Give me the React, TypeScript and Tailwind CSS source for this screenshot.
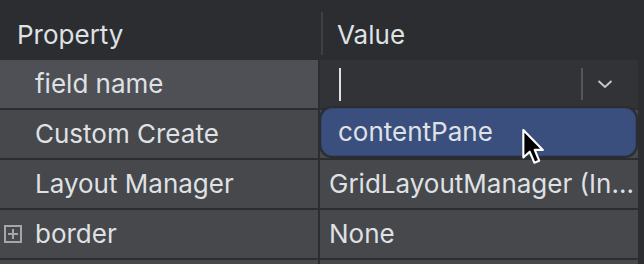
import React from "react";

function Row({ left, right, leftBg = "bg-[#46484c]", rightBg = "bg-[#46484c]", plus = false, rightContent }: { left: string; right?: string; leftBg?: string; rightBg?: string; plus?: boolean; rightContent?: React.ReactNode }) {
  return (
    <div className="flex h-[48px] shrink-0 gap-[2px]">
      <div className={`relative flex w-[318px] items-center pl-[35px] ${leftBg}`}>
        {plus && (
          <div className="absolute left-[4px] top-[15px] flex h-[18px] w-[18px] items-center justify-center border-[2px] border-[#a4a6aa]">
            <div className="absolute h-[2px] w-[10px] bg-[#a4a6aa]" />
            <div className="absolute h-[10px] w-[2px] bg-[#a4a6aa]" />
          </div>
        )}
        <span className="whitespace-nowrap">{left}</span>
      </div>
      <div className={`flex w-[318px] min-w-0 items-center pl-[9px] pr-[2px] ${rightBg}`}>
        {rightContent ?? <span className="min-w-0 truncate whitespace-nowrap leading-[1.4]">{right}</span>}
      </div>
    </div>
  );
}

export default function App() {
  return (
    <div
      className="relative h-[264px] w-[644px] overflow-hidden bg-[#2b2d30] text-[26px] leading-none text-[#dfe1e5]"
      style={{ fontFamily: "Inter, 'Noto Sans', sans-serif" }}
    >
      <div className="flex h-[58px] items-end pb-[10px]">
        <div className="w-[321px] pl-[17px]">Property</div>
        <div className="mb-[-7px] h-[43px] w-[2px] bg-[#3e4044]" />
        <div className="pl-[14px]">Value</div>
      </div>
      <div className="mt-[2px] flex flex-col gap-[2px]">
        <Row
          left="field name"
          leftBg="bg-[#4e5055]"
          rightBg="bg-[#313337]"
          rightContent={
            <div className="flex h-full w-full items-center pr-[4px]">
              <div className="ml-[10px] h-[33px] w-[2px] bg-[#dfe1e5]" />
              <div className="ml-auto h-[32px] w-[2px] bg-[#55575b]" />
              <svg className="ml-[14px] mr-[19px]" width="16" height="10" viewBox="0 0 16 10">
                <path d="M1.5 2 L8 8 L14.5 2" fill="none" stroke="#c4c6ca" strokeWidth="2" />
              </svg>
            </div>
          }
        />
        <Row left="Custom Create" right="" />
        <Row left="Layout Manager" right="GridLayoutManager (IntelliJ)" />
        <Row left="border" right="None" plus />
        <Row left="" right="" />
      </div>

      <div className="absolute left-[319px] top-[106px] h-[52px] w-[319px] rounded-[13px] bg-[#2b2d30] p-[2px]">
        <div className="flex h-full w-full items-center rounded-[11px] border border-[#34466e] bg-[#3a4f7e] pl-[16px]">
          <span>contentPane</span>
        </div>
      </div>

      <svg className="absolute left-[521px] top-[129px]" width="30" height="38" viewBox="0 0 28 36">
        <path
          d="M2 1 L2 27 L8 21.5 L12.5 32 L17 30 L12.8 19.8 L20.5 19.8 Z"
          fill="#000"
          stroke="#fff"
          strokeWidth="2"
          strokeLinejoin="round"
        />
      </svg>
    </div>
  );
}
